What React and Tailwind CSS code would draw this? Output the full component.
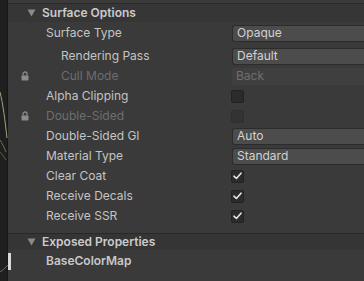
const rows = [
  { label: 'Surface Type', kind: 'dropdown', value: 'Opaque' },
  { label: 'Rendering Pass', kind: 'dropdown', value: 'Default', indent: true },
  { label: 'Cull Mode', kind: 'dropdown', value: 'Back', indent: true, disabled: true },
  { label: 'Alpha Clipping', kind: 'check', checked: false },
  { label: 'Double-Sided', kind: 'check', checked: false, disabled: true },
  { label: 'Double-Sided GI', kind: 'dropdown', value: 'Auto' },
  { label: 'Material Type', kind: 'dropdown', value: 'Standard' },
  { label: 'Clear Coat', kind: 'check', checked: true },
  { label: 'Receive Decals', kind: 'check', checked: true },
  { label: 'Receive SSR', kind: 'check', checked: true },
];

function Caret() {
  return (
    <svg width="9" height="8" viewBox="0 0 9 8" className="shrink-0">
      <path d="M0.5 0.5 L8.5 0.5 L4.5 7.5 Z" fill="#8a8a8a" />
    </svg>
  );
}

function Check() {
  return (
    <svg width="9" height="8" viewBox="0 0 9 8">
      <path d="M1 4.2 L3.4 6.5 L8 1.2" fill="none" stroke="#e6e6e6" strokeWidth="1.6" strokeLinecap="round" strokeLinejoin="round" />
    </svg>
  );
}

function LockIcon() {
  return (
    <svg width="8" height="10" viewBox="0 0 8 10">
      <path d="M2 4.5 V3 a2 2 0 0 1 4 0 V4.5" fill="none" stroke="#8c8c8c" strokeWidth="1.3" />
      <rect x="0.5" y="4.5" width="7" height="5" rx="0.8" fill="#8c8c8c" />
    </svg>
  );
}

function Field({ row }) {
  if (row.kind === 'dropdown') {
    return (
      <div
        className={
          row.disabled
            ? 'flex h-[17px] flex-1 items-center rounded-l-[3px] bg-[#3f3f3f] pl-[4px] text-[#6f6f6f]'
            : 'flex h-[17px] flex-1 items-center rounded-l-[3px] border border-r-0 border-[#2c2c2c] bg-[#4c4c4c] pl-[4px] text-[#d2d2d2]'
        }
      >
        {row.value}
      </div>
    );
  }
  return (
    <div
      className={
        row.disabled
          ? '-ml-[1px] flex h-[13px] w-[13px] items-center justify-center rounded-[2px] border border-[#2e2e2e] bg-[#333333]'
          : '-ml-[1px] flex h-[13px] w-[13px] items-center justify-center rounded-[2px] border border-[#222222] bg-[#2b2b2b]'
      }
    >
      {row.checked && <Check />}
    </div>
  );
}

export default function App() {
  return (
    <div
      className="flex h-[281px] w-[364px] overflow-hidden bg-[#3a3a3a] text-[12px] text-[#c4c4c4]"
      style={{ fontFamily: 'Inter, "Noto Sans", sans-serif' }}
    >
      {/* graph view peeking in on the left */}
      <div className="relative w-[8px] shrink-0 border-r border-[#161616] bg-[#1f1f1f]">
        <svg width="8" height="281" viewBox="0 0 8 281" className="absolute inset-0">
          <path d="M0 92 C3 104 5 120 7 138" fill="none" stroke="#a3a37a" strokeWidth="1" />
          <path d="M0 140 C2 143 4 147 6 152" fill="none" stroke="#6f6f5a" strokeWidth="1" />
          <path d="M0 152 C2 154 4 157 6 160" fill="none" stroke="#5c5c4c" strokeWidth="1" />
          <path d="M0 272 C3 270 5 268 8 265" fill="none" stroke="#6a6a5a" strokeWidth="1" />
        </svg>
      </div>

      <div className="relative flex flex-1 flex-col">
        <div className="h-[4px] border-b border-[#2a2a2a] bg-[#3a3a3a]" />
        <div className="flex h-[18px] items-center gap-[6px] bg-[#363636] pl-[19px] font-semibold text-[#cbcbcb]">
          <Caret />
          <span>Surface Options</span>
        </div>

        <div className="mt-[1px] flex flex-col">
          {rows.map((row, i) => (
            <div
              key={row.label}
              className={'flex h-[20px] items-center ' + (i === 1 ? 'mt-[3px]' : '')}
            >
              <div className="flex w-[38px] shrink-0 items-center pl-[13px]">
                {row.disabled && <LockIcon />}
              </div>
              <div
                className={
                  (row.indent ? 'pl-[15px] ' : '') +
                  'w-[186px] shrink-0 whitespace-nowrap ' +
                  (row.disabled ? 'text-[#6e6e6e]' : '')
                }
              >
                {row.label}
              </div>
              <Field row={row} />
            </div>
          ))}
        </div>

        <div className="mt-[7px] border-t border-[#282828]" />
        <div className="flex h-[16px] items-center gap-[6px] bg-[#353535] pl-[19px] font-semibold text-[#cbcbcb]">
          <Caret />
          <span>Exposed Properties</span>
        </div>
        <div className="relative mt-[1px] flex h-[20px] items-center pl-[38px] font-semibold text-[#c8c8c8]">
          <div className="absolute left-0 top-[2px] h-[17px] w-[3px] bg-[#d9d9d9]" />
          BaseColorMap
        </div>
      </div>
    </div>
  );
}
